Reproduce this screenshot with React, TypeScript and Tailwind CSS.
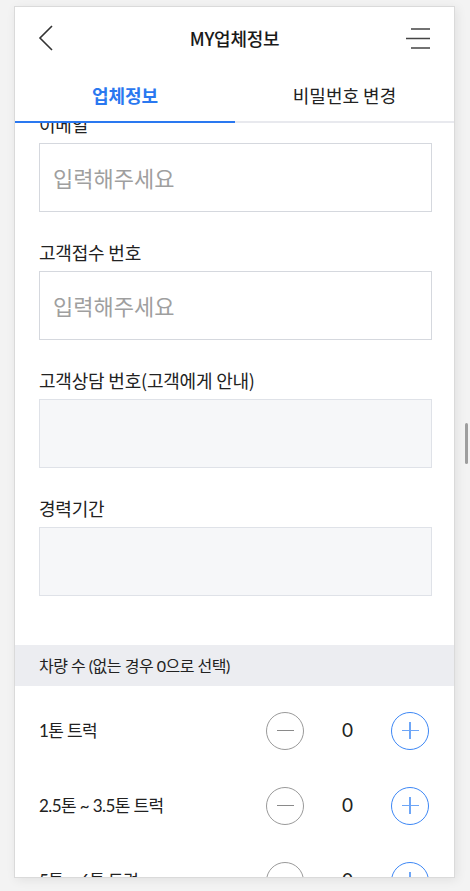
import { useState } from "react";

const KR = "font-['Noto_Sans_CJK_KR','Noto_Sans',sans-serif]";
const LATO = "font-['Lato','Noto_Sans_CJK_KR',sans-serif]";

function Field({ label, filled }: { label: string; filled?: boolean }) {
  return (
    <div className="mt-[28px] first:mt-0">
      <div className="h-[24px] text-[18px] leading-[24px] text-[#222] tracking-[-0.2px]">{label}</div>
      <div
        className={`mt-[7px] h-[69px] w-[393px] border flex items-center pl-[13px] ${
          filled ? "bg-[#f6f7f9] border-[#dfe2e8]" : "bg-white border-[#d5d8de]"
        }`}
      >
        {!filled && <span className="text-[22px] text-[#9f9f9f]">입력해주세요</span>}
      </div>
    </div>
  );
}

function Counter({ label }: { label: string }) {
  const [n, setN] = useState(0);
  return (
    <div className="h-[75px] flex items-center justify-between pl-[24px] pr-[25px]">
      <span className={`${LATO} text-[17px] text-[#222] tracking-[-0.6px]`}>{label}</span>
      <div className="flex items-center">
        <button
          onClick={() => setN(Math.max(0, n - 1))}
          className="w-[38px] h-[38px] rounded-full border border-[#9a9a9a] flex items-center justify-center"
        >
          <span className="block w-[17px] h-[1.5px] bg-[#8a8a8a]" />
        </button>
        <span className={`${LATO} w-[87px] text-center text-[19px] text-[#222]`}>{n}</span>
        <button
          onClick={() => setN(n + 1)}
          className="relative w-[38px] h-[38px] rounded-full border-[1.5px] border-[#3d87f5] flex items-center justify-center"
        >
          <span className="absolute w-[17px] h-[1.5px] bg-[#6ea6f7]" />
          <span className="absolute w-[1.5px] h-[17px] bg-[#6ea6f7]" />
        </button>
      </div>
    </div>
  );
}

export default function App() {
  const [tab, setTab] = useState("info");

  return (
    <div className={`${KR} relative h-[891px] w-[470px] bg-[#f3f3f3] pt-[6px] pl-[14px] overflow-hidden`}>
      <div className="w-[441px] h-[872px] bg-white border border-[#dadada] shadow-[2px_2px_10px_rgba(0,0,0,0.08)] flex flex-col overflow-hidden">
        {/* Header */}
        <div className="h-[62px] shrink-0 flex items-center justify-between px-[23px]">
          <div className="w-[28px] flex">
            <svg width="16" height="28" viewBox="0 0 16 28" fill="none">
              <path d="M14 2 L2 14 L14 26" stroke="#333" strokeWidth="1.6" />
            </svg>
          </div>
          <span className="text-[18px] font-medium text-[#1a1a1a] tracking-[-0.3px]">MY업체정보</span>
          <div className="w-[28px] flex justify-end">
            <svg width="26" height="24" viewBox="0 0 26 24" fill="none">
              <path d="M6 3 H25 M1 12.5 H25 M6 22 H25" stroke="#444" strokeWidth="1.5" />
            </svg>
          </div>
        </div>

        {/* Tabs */}
        <div className="h-[54px] shrink-0 flex border-b-2 border-[#e8e9ee]">
          <button
            onClick={() => setTab("info")}
            className={`w-[220px] -mb-[2px] border-b-2 text-[18px] ${
              tab === "info" ? "border-[#2a78f0] text-[#2a78f0] font-bold" : "border-transparent text-[#222]"
            }`}
          >
            업체정보
          </button>
          <button
            onClick={() => setTab("pw")}
            className={`flex-1 -mb-[2px] border-b-2 text-[18px] ${
              tab === "pw" ? "border-[#2a78f0] text-[#2a78f0] font-bold" : "border-transparent text-[#222]"
            }`}
          >
            비밀번호 변경
          </button>
        </div>

        {/* Scrolled content */}
        <div className="flex-1 overflow-hidden">
          <div className="-mt-[11px]">
            <div className="px-[24px]">
              <Field label="이메일" />
              <Field label="고객접수 번호" />
              <Field label="고객상담 번호(고객에게 안내)" filled />
              <Field label="경력기간" filled />
            </div>

            <div className={`${LATO} mt-[49px] h-[41px] bg-[#ecedf1] flex items-center pl-[24px] text-[16px] text-[#222] tracking-[-0.5px]`}>
              차량 수 (없는 경우 0으로 선택)
            </div>

            <div className="pt-[7px]">
              <Counter label="1톤 트럭" />
              <Counter label="2.5톤 ~ 3.5톤 트럭" />
              <Counter label="5톤 ~ 6톤 트럭" />
              <Counter label="8톤 이상 트럭" />
            </div>
          </div>
        </div>
      </div>

      {/* scrollbar thumb */}
      <div className="absolute left-[465px] top-[423px] w-[3px] h-[41px] rounded-full bg-[#9e9e9e]" />
    </div>
  );
}
